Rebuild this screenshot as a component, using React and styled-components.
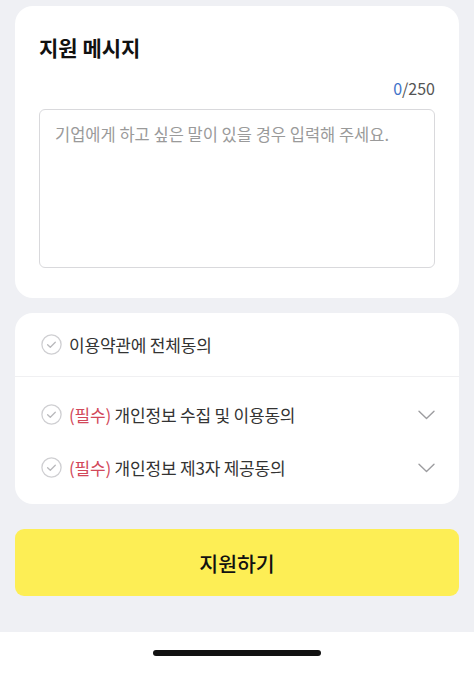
import React, { useState } from "react";
import styled, { createGlobalStyle } from "styled-components";

const GlobalStyle = createGlobalStyle`
  * { box-sizing: border-box; }
  html, body {
    margin: 0;
    padding: 0;
    background: #ffffff;
    font-family: "Noto Sans CJK KR", "Noto Sans", sans-serif;
    color: #222;
  }
`;

const Screen = styled.div`
  width: 474px;
  height: 674px;
  display: flex;
  flex-direction: column;
  background: #ffffff;
`;

const Content = styled.main`
  height: 632px;
  background: #eff0f4;
  padding: 6px 15px 0;
  display: flex;
  flex-direction: column;
`;

const Card = styled.section`
  background: #ffffff;
  border-radius: 18px;
`;

const MessageCard = styled(Card)`
  padding: 28px 24px 30px;
`;

const Title = styled.h2`
  margin: 0;
  font-size: 21px;
  font-weight: 700;
  line-height: 26px;
  color: #111;
`;

const Counter = styled.div`
  margin-top: 18px;
  text-align: right;
  font-size: 16px;
  line-height: 20px;
  color: #555;
  .count {
    color: #3f73c9;
  }
`;

const TextArea = styled.textarea`
  display: block;
  width: 100%;
  height: 159px;
  margin-top: 11px;
  padding: 12px 15px;
  border: 1px solid #d9d9dc;
  border-radius: 6px;
  resize: none;
  outline: none;
  font-family: inherit;
  font-size: 16.5px;
  line-height: 24px;
  color: #222;
  &::placeholder {
    color: #9a9a9a;
  }
`;

const AgreeCard = styled(Card)`
  margin-top: 15px;
`;

const AllRow = styled.div`
  height: 64px;
  display: flex;
  align-items: center;
  padding: 0 26px;
  border-bottom: 1px solid #f0f0f2;
`;

const List = styled.div`
  padding: 11px 0 10px;
`;

const Row = styled.div`
  height: 53px;
  display: flex;
  align-items: center;
  padding: 0 24px 0 26px;
`;

const Label = styled.span`
  margin-left: 7px;
  flex: 1;
  font-size: 17px;
  letter-spacing: -0.2px;
  color: #333;
  .req {
    color: #d2485a;
  }
`;

const SubmitButton = styled.button`
  margin-top: 25px;
  height: 67px;
  width: 100%;
  border: none;
  border-radius: 9px;
  background: #fdee55;
  font-family: inherit;
  font-size: 20.5px;
  font-weight: 500;
  color: #111;
  cursor: pointer;
`;

const HomeBar = styled.div`
  flex: 1;
  display: flex;
  align-items: center;
  justify-content: center;
  span {
    display: block;
    width: 168px;
    height: 6px;
    border-radius: 3px;
    background: #111;
  }
`;

const CheckCircle = () => (
  <svg width="21" height="21" viewBox="0 0 21 21" fill="none">
    <circle cx="10.5" cy="10.5" r="9.6" stroke="#cfcfd2" strokeWidth="1.3" />
    <path
      d="M6.6 10.7l2.7 2.6 5-5"
      stroke="#b9b9bc"
      strokeWidth="1.3"
      strokeLinecap="round"
      strokeLinejoin="round"
    />
  </svg>
);

const Chevron = () => (
  <svg width="17" height="10" viewBox="0 0 17 10" fill="none">
    <path
      d="M1 1.2l7.5 7.3L16 1.2"
      stroke="#9d9da0"
      strokeWidth="1.4"
      strokeLinecap="round"
      strokeLinejoin="round"
    />
  </svg>
);

const terms = ["개인정보 수집 및 이용동의", "개인정보 제3자 제공동의"];

export default function App() {
  const [message, setMessage] = useState("");
  return (
    <Screen>
      <GlobalStyle />
      <Content>
        <MessageCard>
          <Title>지원 메시지</Title>
          <Counter>
            <span className="count">{message.length}</span>/250
          </Counter>
          <TextArea
            maxLength={250}
            value={message}
            onChange={(e) => setMessage(e.target.value)}
            placeholder="기업에게 하고 싶은 말이 있을 경우 입력해 주세요."
          />
        </MessageCard>

        <AgreeCard>
          <AllRow>
            <CheckCircle />
            <Label>이용약관에 전체동의</Label>
          </AllRow>
          <List>
            {terms.map((t) => (
              <Row key={t}>
                <CheckCircle />
                <Label>
                  <span className="req">(필수)</span> {t}
                </Label>
                <Chevron />
              </Row>
            ))}
          </List>
        </AgreeCard>

        <SubmitButton type="button">지원하기</SubmitButton>
      </Content>
      <HomeBar>
        <span />
      </HomeBar>
    </Screen>
  );
}
